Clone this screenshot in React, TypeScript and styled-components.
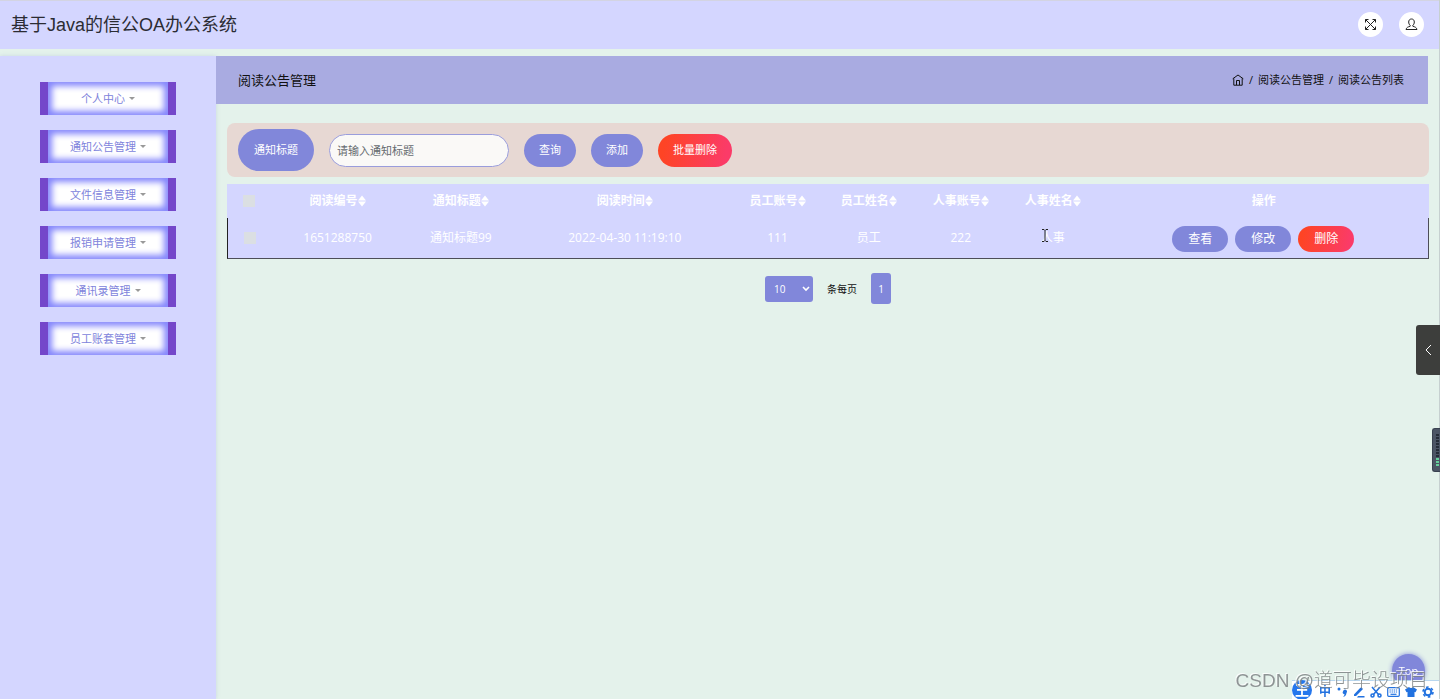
import React from 'react';
import styled, { createGlobalStyle, css } from 'styled-components';

const GlobalStyle = createGlobalStyle`
  * { box-sizing: border-box; }
  body {
    margin: 0;
    background: #e4f2eb;
    color: #111;
    font-family: "Open Sans", "Noto Sans CJK SC", sans-serif;
    font-size: 12px;
    line-height: 18px;
  }
  button, input, select { font: inherit; margin: 0; }
`;

const Page = styled.div`
  display: flex;
  flex-direction: column;
  min-height: 100vh;
  border-right: 1px solid #c6d0d0;
`;

const TopBar = styled.header`
  display: flex;
  align-items: center;
  justify-content: space-between;
  height: 49px;
  padding: 0 15px 1px 11px;
  background: #d4d6ff;
  border-top: 1px solid #d3d4e2;
`;

const SiteTitle = styled.h1`
  margin: 0;
  font-family: "Liberation Sans", "Noto Sans CJK SC", sans-serif;
  font-size: 18px;
  line-height: 24px;
  font-weight: 400;
  color: #2b2c33;
`;

const TopActions = styled.div`
  display: flex;
  gap: 16px;
`;

const RoundButton = styled.button`
  display: flex;
  align-items: center;
  justify-content: center;
  width: 25px;
  height: 25px;
  padding: 0;
  border: 0;
  border-radius: 50%;
  background: #fff;
  color: #222;
`;

const Body = styled.div`
  display: flex;
  flex: 1;
  margin-top: 7px;
`;

const Sidebar = styled.nav`
  flex: 0 0 216px;
  padding: 26px 40px;
  background: #d4d6ff;
  box-shadow: 0 0 4px rgba(120, 140, 190, 0.25);
`;

const Menu = styled.ul`
  display: flex;
  flex-direction: column;
  gap: 15px;
  margin: 0;
  padding: 0;
  list-style: none;
`;

const MenuButton = styled.button`
  display: flex;
  align-items: center;
  justify-content: center;
  gap: 4px;
  width: 100%;
  height: 33px;
  padding: 0;
  border: 0 solid #7447ca;
  border-width: 0 8px;
  background: #fff;
  box-shadow: inset 0 0 6px 4px #8486fc;
  color: #8083dc;
  font-size: 11px;
`;

const Caret = styled.span`
  border: 3px solid transparent;
  border-top-color: #999;
  border-bottom: 0;
`;

const Main = styled.main`
  flex: 1;
  min-width: 0;
`;

const PageHead = styled.div`
  display: flex;
  align-items: center;
  justify-content: space-between;
  height: 48px;
  margin-right: 11px;
  padding: 0 24px 0 22px;
  background: #a9abe1;
`;

const PageTitle = styled.h2`
  margin: 0;
  font-size: 13px;
  font-weight: 400;
`;

const Breadcrumb = styled.div`
  display: flex;
  align-items: center;
  gap: 5px;
  font-size: 11px;
`;

const Crumb = styled.a`
  display: flex;
  color: inherit;
  text-decoration: none;
`;

const Content = styled.div`
  padding: 19px 10px 0 11px;
`;

const SearchBar = styled.form`
  display: flex;
  align-items: center;
  gap: 15px;
  height: 54px;
  padding: 0 11px;
  border-radius: 8px;
  background: #e7d8d3;
  font-size: 11px;
`;

const FieldLabel = styled.label`
  padding: 12px 16px;
  border-radius: 21px;
  background: #8187da;
  color: #fff;
`;

const SearchInput = styled.input`
  width: 180px;
  height: 33px;
  padding: 0 7px;
  border: 1px solid #9a9ddc;
  border-radius: 17px;
  background: #faf9f7;
  &::placeholder { color: #666b70; opacity: 1; }
`;

const fill = css<{ $danger?: boolean }>`
  background: ${p => (p.$danger ? 'linear-gradient(100deg, #fe4425 10%, #fb3b68 90%)' : '#8187da')};
`;

const ToolButton = styled.button<{ $danger?: boolean }>`
  height: 33px;
  padding: 0 15px;
  border: 0;
  border-radius: 17px;
  color: #fff;
  ${fill}
`;

const RowButton = styled.button<{ $danger?: boolean }>`
  height: 26px;
  padding: 0 16px;
  border: 0;
  border-radius: 13px;
  color: #fff;
  font-size: 12px;
  ${fill}
`;

const Table = styled.table`
  width: 100%;
  margin-top: 7px;
  border-spacing: 0;
  table-layout: fixed;
  background: #d4d6ff;
  color: #fff;
  text-align: center;
`;

const Th = styled.th<{ $width: string }>`
  width: ${p => p.$width};
  height: 34px;
  padding: 0;
  font-weight: 700;
  white-space: nowrap;
`;

const HeadLabel = styled.span`
  display: flex;
  align-items: center;
  justify-content: center;
`;

const Td = styled.td`
  height: 41px;
  padding: 0;
  border-bottom: 1px solid #4d4e58;
  white-space: nowrap;
  &:first-child { border-left: 1px solid #222; }
  &:last-child { border-right: 1px solid #4d4e58; }
`;

const RowActions = styled.div`
  display: flex;
  justify-content: center;
  gap: 7px;
  padding-top: 2px;
`;

const Check = styled.input`
  display: block;
  appearance: none;
  width: 12px;
  height: 12px;
  margin: 0 auto;
  background: #dbdfe3;
`;

const PointerHost = styled.span`
  position: relative;
`;

const PointerMark = styled.svg`
  position: absolute;
  left: 0;
  top: 0;
`;

const Pager = styled.div`
  display: flex;
  align-items: center;
  justify-content: center;
  gap: 14px;
  padding-top: 14px;
  font-size: 10px;
`;

const PageSize = styled.label`
  display: flex;
  align-items: center;
  gap: 14px;
`;

const SelectWrap = styled.span`
  display: grid;
  align-items: center;
  > * { grid-area: 1 / 1; }
  svg { justify-self: end; margin-right: 3px; pointer-events: none; }
`;

const SizeSelect = styled.select`
  appearance: none;
  width: 48px;
  height: 26px;
  padding: 0 9px;
  border: 0;
  border-radius: 3px;
  background: #8187da;
  color: #fff;
`;

const PageButton = styled.button`
  width: 20px;
  height: 31px;
  padding: 0;
  border: 0;
  border-radius: 3px;
  background: #8187da;
  color: #fff;
`;

const DrawerHandle = styled.button`
  position: fixed;
  right: 0;
  top: 325px;
  display: flex;
  align-items: center;
  justify-content: center;
  width: 24px;
  height: 50px;
  padding: 0;
  border: 0;
  border-radius: 3px 0 0 3px;
  background: #3d3e3c;
  color: #fff;
`;

const Meter = styled.div`
  position: fixed;
  right: 0;
  top: 428px;
  display: flex;
  flex-direction: column;
  gap: 1px;
  width: 8px;
  height: 44px;
  padding: 5px 1px 4px 3px;
  border-radius: 3px 0 0 3px;
  border: 1px solid #394150;
  border-right: 0;
  background: #4c5565;
`;

const MeterBar = styled.span<{ $on: boolean }>`
  height: 2px;
  background: ${p => (p.$on ? '#65cf9b' : '#252c38')};
`;

const BackToTop = styled.a`
  position: fixed;
  right: 15px;
  bottom: 12px;
  width: 33px;
  height: 33px;
  border-radius: 50%;
  background: #8187da;
  box-shadow: 0 0 5px #8187da;
  color: #fff;
  font-size: 11px;
  line-height: 34px;
  text-align: center;
  text-decoration: none;
`;

const ImeBar = styled.div`
  position: fixed;
  right: 1px;
  bottom: 0;
  display: flex;
  align-items: center;
  gap: 5px;
  height: 19px;
  padding: 3px 5px 0 27px;
  border-top: 1px solid #b8d6ee;
  background: #fff;
  color: #2272e0;
  font-weight: 700;
  svg { display: block; }
`;

const ImeLogo = styled.span`
  position: absolute;
  left: 0;
  bottom: -1px;
  width: 20px;
  height: 20px;
  border-radius: 50%;
  background: #2577ed;
  color: #fff;
  font-size: 14px;
  line-height: 20px;
  text-align: center;
`;

const Watermark = styled.div`
  position: fixed;
  right: 12px;
  bottom: 6px;
  color: rgba(125, 130, 132, 0.85);
  font-family: "Liberation Sans", "Noto Sans CJK SC", sans-serif;
  font-size: 19px;
  line-height: 24px;
  font-weight: 300;
  text-shadow: -1px -1px 0 rgba(255, 255, 255, 0.8);
  pointer-events: none;
`;

const menuItems = ['个人中心', '通知公告管理', '文件信息管理', '报销申请管理', '通讯录管理', '员工账套管理'];

const columns = [
  { label: '阅读编号', width: '11%' },
  { label: '通知标题', width: '9.5%' },
  { label: '阅读时间', width: '17.8%' },
  { label: '员工账号', width: '7.6%' },
  { label: '员工姓名', width: '7.6%' },
  { label: '人事账号', width: '7.7%' },
  { label: '人事姓名', width: '7.6%' },
];

const record = ['1651288750', '通知标题99', '2022-04-30 11:19:10', '111', '员工', '222'];

const SortIcon = () => (
  <svg width="8" height="12" viewBox="0 0 8 12" fill="currentColor" aria-hidden="true">
    <path d="M4 .5 8 5.500H0zM4 11.500 0 6.500h8z" />
  </svg>
);

const ExpandIcon = () => (
  <svg width="13" height="13" viewBox="0 0 13 13" fill="none" stroke="currentColor" aria-hidden="true">
    <path d="m1.500 1.500 10 10M11.500 1.500l-10 10M1.500 4.500v-3h3M8.500 1.500h3v3M1.500 8.500v3h3M8.500 11.500h3v-3" />
  </svg>
);

const UserIcon = () => (
  <svg width="13" height="13" viewBox="0 0 13 13" fill="none" stroke="currentColor" aria-hidden="true">
    <path d="M6.500 1C4.700 1 3.700 2.200 3.700 4c0 1.500.6 2.700 1.500 3.400v.8C3 8.900 1.300 9.600 1 11.500h11c-.3-1.900-2-2.600-4.200-3.300v-.8C8.700 6.700 9.300 5.500 9.300 4c0-1.800-1-3-2.800-3z" />
  </svg>
);

const HomeIcon = () => (
  <svg width="12" height="12" viewBox="0 0 12 12" fill="none" stroke="currentColor" aria-hidden="true">
    <path d="M.7 4.800 6 1l5.300 3.800M1.800 4.300v6.900h8.400V4.300M4.500 11V6.500h3V11" />
  </svg>
);

export default function App() {
  return (
    <>
      <GlobalStyle />
      <Page>
        <TopBar>
          <SiteTitle>基于Java的信公OA办公系统</SiteTitle>
          <TopActions>
            <RoundButton type="button" aria-label="全屏"><ExpandIcon /></RoundButton>
            <RoundButton type="button" aria-label="用户"><UserIcon /></RoundButton>
          </TopActions>
        </TopBar>
        <Body>
          <Sidebar>
            <Menu>
              {menuItems.map(item => (
                <li key={item}>
                  <MenuButton type="button">{item}<Caret /></MenuButton>
                </li>
              ))}
            </Menu>
          </Sidebar>
          <Main>
            <PageHead>
              <PageTitle>阅读公告管理</PageTitle>
              <Breadcrumb>
                <Crumb href="#" aria-label="首页"><HomeIcon /></Crumb>
                <span>/</span>
                <Crumb href="#">阅读公告管理</Crumb>
                <span>/</span>
                <span>阅读公告列表</span>
              </Breadcrumb>
            </PageHead>
            <Content>
              <SearchBar onSubmit={e => e.preventDefault()}>
                <FieldLabel htmlFor="title">通知标题</FieldLabel>
                <SearchInput id="title" type="text" placeholder="请输入通知标题" />
                <ToolButton type="submit">查询</ToolButton>
                <ToolButton type="button">添加</ToolButton>
                <ToolButton type="button" $danger>批量删除</ToolButton>
              </SearchBar>
              <Table>
                <thead>
                  <tr>
                    <Th $width="3.7%"><Check type="checkbox" aria-label="全选" /></Th>
                    {columns.map(c => (
                      <Th key={c.label} $width={c.width}>
                        <HeadLabel>{c.label}<SortIcon /></HeadLabel>
                      </Th>
                    ))}
                    <Th $width="27.5%">操作</Th>
                  </tr>
                </thead>
                <tbody>
                  <tr>
                    <Td><Check type="checkbox" aria-label="选择" /></Td>
                    {record.map(value => <Td key={value}>{value}</Td>)}
                    <Td>
                      <PointerHost>
                        人事
                        <PointerMark width="8" height="13" viewBox="0 0 8 13" fill="none" stroke="#222" aria-hidden="true">
                          <path d="M1 .5h2l1 1 1-1h2M4 1.500v10M1 12.500h2l1-1 1 1h2" />
                        </PointerMark>
                      </PointerHost>
                    </Td>
                    <Td>
                      <RowActions>
                        <RowButton type="button">查看</RowButton>
                        <RowButton type="button">修改</RowButton>
                        <RowButton type="button" $danger>删除</RowButton>
                      </RowActions>
                    </Td>
                  </tr>
                </tbody>
              </Table>
              <Pager>
                <PageSize>
                  <SelectWrap>
                    <SizeSelect defaultValue="10">
                      <option>10</option>
                      <option>25</option>
                      <option>50</option>
                    </SizeSelect>
                    <svg width="8" height="6" viewBox="0 0 8 6" fill="none" stroke="#fff" strokeWidth="1.6" aria-hidden="true">
                      <path d="m1 1 3 3 3-3" />
                    </svg>
                  </SelectWrap>
                  条每页
                </PageSize>
                <PageButton type="button">1</PageButton>
              </Pager>
            </Content>
          </Main>
        </Body>
      </Page>
      <DrawerHandle type="button" aria-label="展开">
        <svg width="7" height="12" viewBox="0 0 7 12" fill="none" stroke="currentColor" aria-hidden="true">
          <path d="M6 1 1 6l5 5" />
        </svg>
      </DrawerHandle>
      <Meter>
        {Array.from({ length: 11 }, (_, i) => <MeterBar key={i} $on={i > 7} />)}
      </Meter>
      <BackToTop href="#">Top</BackToTop>
      <ImeBar>
        <ImeLogo>王</ImeLogo>
        <span>中</span>
        <svg width="12" height="12" viewBox="0 0 12 12" fill="currentColor" aria-hidden="true">
          <circle cx="3" cy="3" r="1.500" />
          <path d="M7 5.500a2 2 0 1 1 3.500 1.400C10.300 9 9 10.500 7 11c1-1 1.500-1.800 1.500-2.700A1.800 1.800 0 0 1 7 5.500z" />
        </svg>
        <svg width="12" height="12" viewBox="0 0 12 12" fill="currentColor" aria-hidden="true">
          <path d="M1 8.500 8 1l2 2-7 7H1zM5 10h6.500v1.500H4z" />
        </svg>
        <svg width="12" height="12" viewBox="0 0 12 12" fill="none" stroke="currentColor" strokeWidth="1.600" aria-hidden="true">
          <path d="m2 1 6.500 7.500M10 1 3.500 8.500" />
          <circle cx="2.500" cy="9.500" r="1.500" />
          <circle cx="9.500" cy="9.500" r="1.500" />
        </svg>
        <svg width="13" height="12" viewBox="0 0 13 12" fill="none" stroke="currentColor" strokeWidth="1.200" aria-hidden="true">
          <rect x=".7" y="1.700" width="11.600" height="8.600" rx="1" />
          <path d="M2.500 4h8M2.500 6h8" strokeDasharray="1.300 .8" />
          <path d="M3.500 8.300h6" />
        </svg>
        <svg width="12" height="12" viewBox="0 0 12 12" fill="currentColor" aria-hidden="true">
          <path d="M4 1c.8 1.200 3.200 1.200 4 0l4 2.500-1.500 2.800L9.500 6v5h-7V6l-1 .3L0 3.500z" />
        </svg>
        <svg width="12" height="12" viewBox="0 0 12 12" fill="none" stroke="currentColor" aria-hidden="true">
          <circle cx="6" cy="6" r="3.300" strokeWidth="2" />
          <circle cx="6" cy="6" r="5" strokeWidth="1.600" strokeDasharray="2.600 2.636" />
        </svg>
      </ImeBar>
      <Watermark>CSDN @道可毕设项目</Watermark>
    </>
  );
}
